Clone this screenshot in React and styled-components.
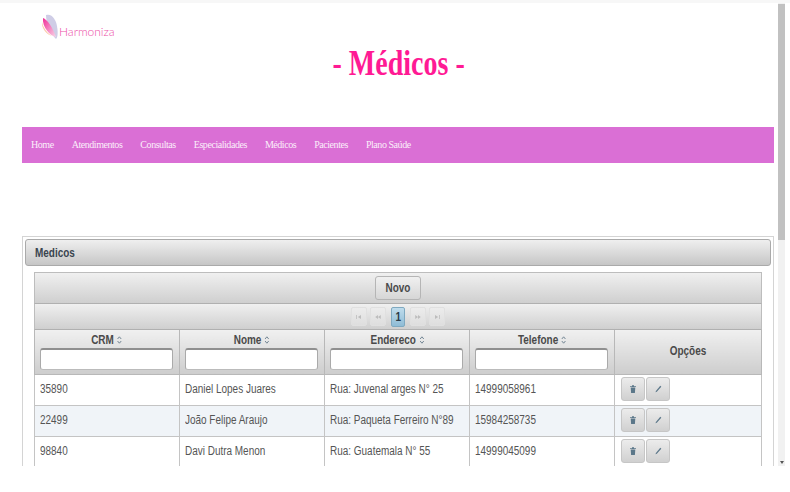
import React from "react";
import styled, { createGlobalStyle } from "styled-components";

const Global = createGlobalStyle`
  html, body { margin: 0; padding: 0; background: #fff; overflow: hidden; }
  * { box-sizing: border-box; }
`;

const Viewport = styled.div`
  width: 790px; height: 492px; background: #fff; overflow: hidden;
`;
const TopLine = styled.div`height: 3px; background: #f7f7f7;`;
const Screen = styled.div`
  width: 785px; height: 463px; display: flex; overflow: hidden;
`;
const Page = styled.div`
  width: 778px; height: 463px; overflow: hidden; flex: none;
`;
const Scrollbar = styled.div`
  width: 7px; flex: none; background: #f1f1f1; display: flex; flex-direction: column; align-items: stretch;
`;
const Thumb = styled.div`
  height: 236px; margin-top: 1px; background: #c1c1c1;
`;
const ArrowDown = styled.div`
  margin-top: auto; margin-bottom: 2px; align-self: center;
  width: 0; height: 0; border-left: 2px solid transparent; border-right: 2px solid transparent; border-top: 3px solid #555;
`;

/* The source page is rendered with horizontally condensed glyphs */
const Squeeze = styled.span`
  display: inline-block; white-space: nowrap;
  transform: scaleX(${p => p.$k || 0.83});
  transform-origin: ${p => p.$origin || "center"} center;
`;

const Header = styled.header`
  height: 124px; position: relative; display: flex; justify-content: center;
`;
const Logo = styled.div`
  position: absolute; left: 41px; top: 9px; display: flex; align-items: flex-end;
`;
const LogoText = styled.span`
  font: 300 12px/13px Lato, "Liberation Sans", sans-serif; color: #ec4fa8; margin-left: -2px; margin-bottom: 4px;
`;
const Title = styled.h1`
  margin: 42px 0 0 19px; font: bold 35px/38px "Liberation Serif", serif; color: #ff1a94;
`;

const Nav = styled.nav`
  margin: 0 4px 0 22px; height: 36px; background: #da6fd5; display: flex; align-items: center; padding-left: 9px; gap: 18px;
`;
const NavLink = styled.a`
  font: 10px/12px "Liberation Serif", serif; color: #fbeefa; letter-spacing: -0.45px;
`;

const Panel = styled.section`
  margin: 73px 4px 0 22px; border: 1px solid #d4d4d4; padding: 2px 2px 0; height: 240px;
`;
const PanelHead = styled.div`
  height: 27px; border: 1px solid #aaa; border-radius: 3px; background: linear-gradient(#efefef, #c6c6c6);
  font: bold 12px/27px "Liberation Sans", sans-serif; color: #3a4550; padding-left: 9px;
`;
const Body = styled.div`
  margin: 6px 9px 0;
`;
const Bar = styled.div`
  height: ${p => p.$h}px; border: 1px solid #bdbdbd; border-bottom-color: #b0b0b0; border-top-width: ${p => p.$flat ? 0 : 1}px;
  background: linear-gradient(#f0f0f0, #cfcfcf); display: flex; justify-content: center; align-items: center;
  gap: ${p => p.$gap || 0}px;
`;
const NewButton = styled.button`
  width: 46px; height: 24px; padding: 0; border: 1px solid #b5b5b5; border-radius: 3px;
  background: linear-gradient(#f0f0f0, #d6d6d6);
  font: bold 12px "Liberation Sans", sans-serif; color: #4a4a4a;
`;
const PageBtn = styled.span`
  width: ${p => p.$w || 16}px; height: ${p => p.$active ? 20 : 19}px; border-radius: 2px; display: flex; align-items: center; justify-content: center;
  border: 1px solid ${p => p.$active ? "#7fa9c0" : "#e0e0e0"};
  background: ${p => p.$active ? "linear-gradient(#bfdcec, #8fbcd6)" : "linear-gradient(#ececec, #dedede)"};
  font: bold 12px "Liberation Sans", sans-serif; color: #2b3b48;
  margin: 0 ${p => p.$mx || 0}px;
`;
const Table = styled.table`
  width: 727px; border-collapse: collapse; table-layout: fixed;
`;
const Th = styled.th`
  height: 44px; padding: 3px 5px 0; vertical-align: top; border: 1px solid #b8b8b8; border-top: 0;
  background: linear-gradient(#f0f0f0, #cdcdcd);
  font: bold 12px/15px "Liberation Sans", sans-serif; color: #4a4a4a;
`;
const ThPlain = styled(Th)`
  vertical-align: middle; padding: 0;
`;
const Filter = styled.input`
  display: block; width: 133px; height: 22px; margin: 0; padding: 0; background: #fff;
  border: 1px solid #bbb; border-top: 2px solid #8f8f8f; border-left-color: #aaa; border-right-color: #aaa; border-radius: 3px;
`;
const Row = styled.tr`
  background: ${p => p.$alt ? "#f0f4f8" : "#fff"};
`;
const Td = styled.td`
  height: 31px; padding: 0 5px; border: 1px solid #c4c4c4;
  font: 12px/15px "Liberation Sans", sans-serif; color: #555;
`;
const ActionTd = styled(Td)`
  padding: 0 0 1px 6px;
`;
const Actions = styled.div`display: flex; gap: 1px;`;
const IconBtn = styled.button`
  width: 24px; height: 24px; padding: 0; border: 1px solid #c6c6c6; border-radius: 3px;
  background: linear-gradient(#ececec, #d0d0d0); display: flex; align-items: center; justify-content: center;
`;

const Wing = () => (
  <svg width="20" height="30" viewBox="0 0 20 30">
    <defs>
      <linearGradient id="w1" x1="0" y1="0" x2="1" y2="1">
        <stop offset="0" stopColor="#f02f98" />
        <stop offset="1" stopColor="#f9d6e8" />
      </linearGradient>
    </defs>
    <path d="M5 3 C11 1 15 8 16 14 C17 20 17 25 15 27 C10 22 5 12 5 3Z" fill="#cfcde6" />
    <path d="M2 6 C6 7 12 16 15 25 C9 24 1 15 2 6Z" fill="url(#w1)" />
    <path d="M1 10 C2 16 7 22 11 24 C6 23 0 16 1 10Z" fill="#fbc9a8" />
  </svg>
);
const Sort = () => (
  <svg width="6" height="8" viewBox="0 0 6 8" style={{ marginLeft: 4 }}>
    <path d="M0.8 3 L3 0.8 L5.2 3 M0.8 5 L3 7.2 L5.2 5" fill="none" stroke="#5a7183" strokeWidth="0.9" />
  </svg>
);
const Trash = () => (
  <svg width="6" height="8" viewBox="0 0 6 8">
    <path d="M0 1.2 H6 V2 H0Z M2 0.3 H4 V1.2 H2Z M0.7 2.5 H5.3 L4.9 8 H1.1Z" fill="#5b7789" />
  </svg>
);
const Pencil = () => (
  <svg width="7" height="8" viewBox="0 0 7 8">
    <path d="M5.3 0.8 L6.3 1.7 L1.8 6.8 L0.6 7.3 L0.9 6Z" fill="#5b7789" />
  </svg>
);
const PageIcon = ({ d }) => (
  <svg width="6" height="4" viewBox="0 0 7 5"><path d={d} fill="#bdbdbd" /></svg>
);

const nav = ["Home", "Atendimentos", "Consultas", "Especialidades", "Médicos", "Pacientes", "Plano Saúde"];
const rows = [
  ["35890", "Daniel Lopes Juares", "Rua: Juvenal arges N° 25", "14999058961"],
  ["22499", "João Felipe Araujo", "Rua: Paqueta Ferreiro N°89", "15984258735"],
  ["98840", "Davi Dutra Menon", "Rua: Guatemala N° 55", "14999045099"],
];
const cols = ["CRM", "Nome", "Endereco", "Telefone"];

export default function App() {
  return (
    <Viewport>
      <Global />
      <TopLine />
      <Screen>
        <Page>
          <Header>
            <Logo>
              <Wing />
              <LogoText>Harmoniza</LogoText>
            </Logo>
            <Title><Squeeze $k={0.8}>- Médicos -</Squeeze></Title>
          </Header>
          <Nav>
            {nav.map(n => <NavLink key={n}>{n}</NavLink>)}
          </Nav>
          <Panel>
            <PanelHead><Squeeze $origin="left">Medicos</Squeeze></PanelHead>
            <Body>
              <Bar $h={32}><NewButton><Squeeze>Novo</Squeeze></NewButton></Bar>
              <Bar $h={26} $flat $gap={3}>
                <PageBtn><PageIcon d="M0 0H1V5H0Z M6 0V5L2 2.5Z" /></PageBtn>
                <PageBtn><PageIcon d="M3.5 0V5L0 2.5Z M7 0V5L3.5 2.5Z" /></PageBtn>
                <PageBtn $w={14} $active $mx={2}><Squeeze>1</Squeeze></PageBtn>
                <PageBtn><PageIcon d="M0 0V5L3.5 2.5Z M3.5 0V5L7 2.5Z" /></PageBtn>
                <PageBtn><PageIcon d="M1 0V5L5 2.5Z M6 0H7V5H6Z" /></PageBtn>
              </Bar>
              <Table>
                <colgroup>
                  <col width="145" /><col width="145" /><col width="145" /><col width="145" /><col width="147" />
                </colgroup>
                <thead>
                  <tr>
                    {cols.map(c => (
                      <Th key={c}><Squeeze>{c}<Sort /></Squeeze><Filter /></Th>
                    ))}
                    <ThPlain><Squeeze>Opções</Squeeze></ThPlain>
                  </tr>
                </thead>
                <tbody>
                  {rows.map((r, i) => (
                    <Row key={r[0]} $alt={i === 1}>
                      {r.map(c => <Td key={c}><Squeeze $origin="left">{c}</Squeeze></Td>)}
                      <ActionTd>
                        <Actions>
                          <IconBtn><Trash /></IconBtn>
                          <IconBtn><Pencil /></IconBtn>
                        </Actions>
                      </ActionTd>
                    </Row>
                  ))}
                </tbody>
              </Table>
            </Body>
          </Panel>
        </Page>
        <Scrollbar>
          <Thumb />
          <ArrowDown />
        </Scrollbar>
      </Screen>
    </Viewport>
  );
}
